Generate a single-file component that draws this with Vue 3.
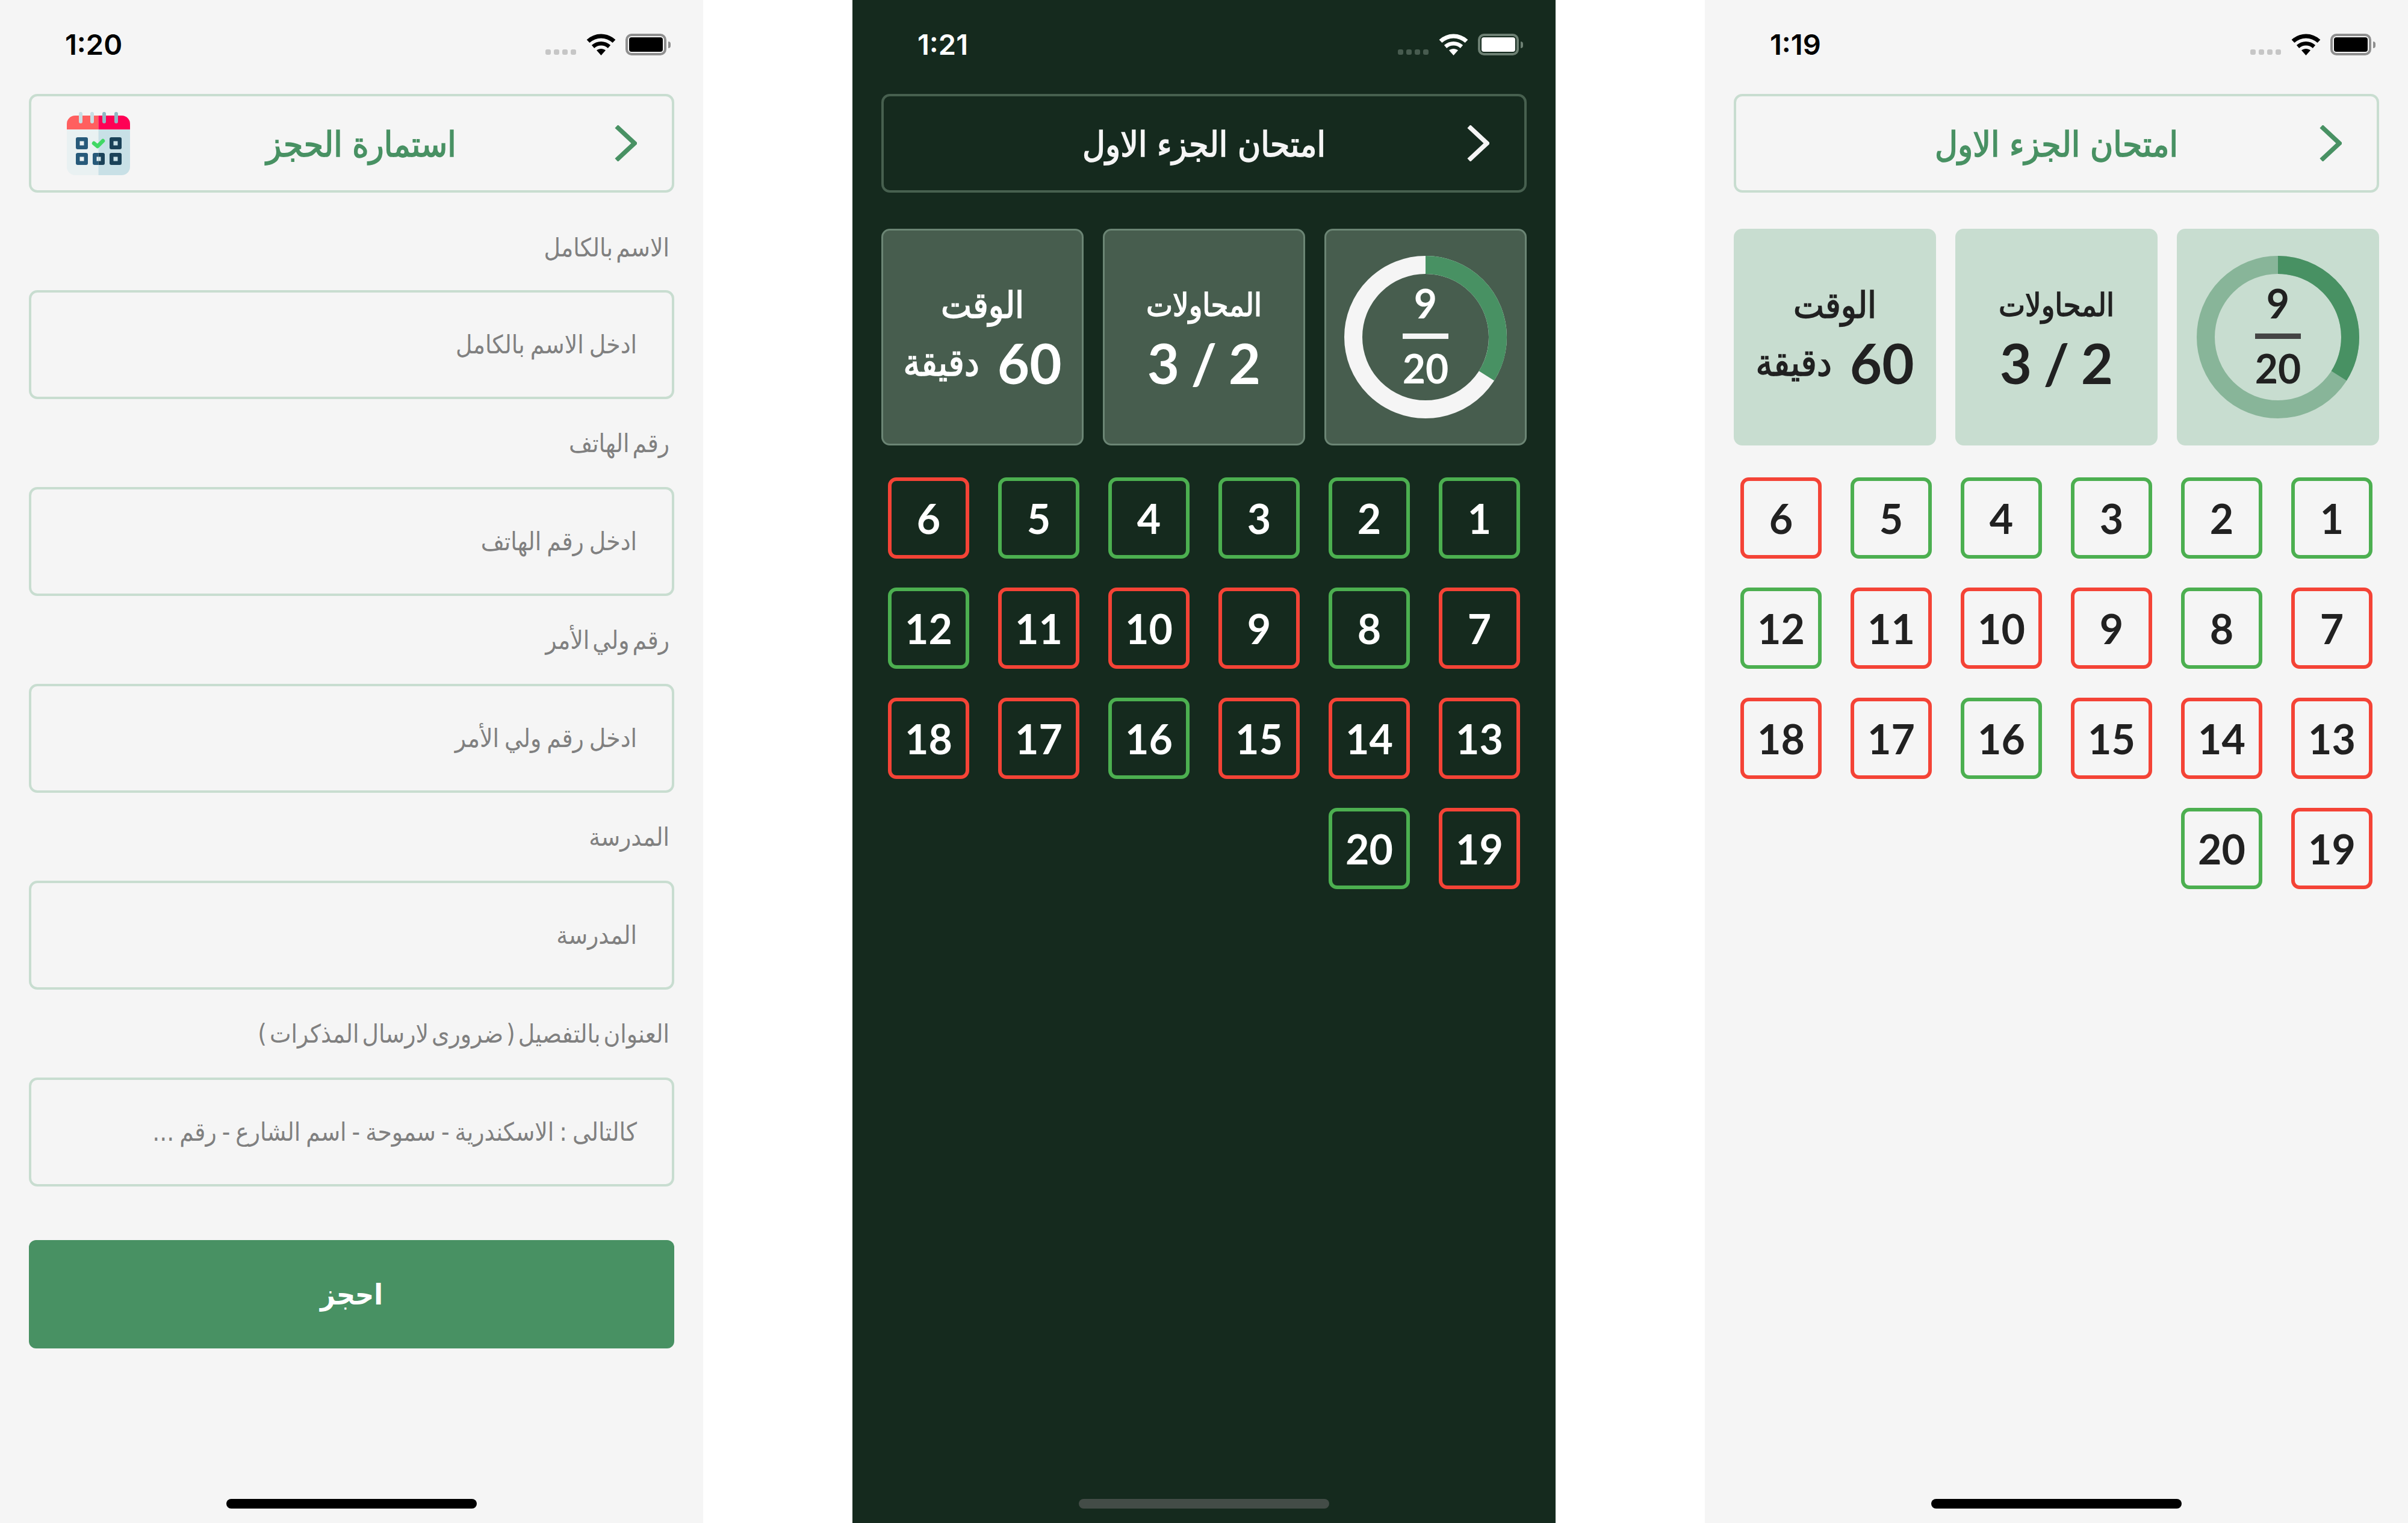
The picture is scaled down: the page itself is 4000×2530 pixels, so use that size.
<script setup>
const fields = [
  { label: 'الاسم بالكامل', hint: 'ادخل الاسم بالكامل' },
  { label: 'رقم الهاتف', hint: 'ادخل رقم الهاتف' },
  { label: 'رقم ولي الأمر', hint: 'ادخل رقم ولي الأمر' },
  { label: 'المدرسة', hint: 'المدرسة' },
  { label: 'العنوان بالتفصيل ( ضرورى لارسال المذكرات )', hint: 'كالتالى : الاسكندرية - سموحة - اسم الشارع - رقم ...' },
]
const red = new Set([6, 7, 9, 10, 11, 13, 14, 15, 17, 18, 19])
const cells = Array.from({ length: 20 }, (_, i) => ({ n: i + 1, bad: red.has(i + 1) }))
const screens = [
  { id: 'form', time: '1:20', dark: false, form: true },
  { id: 'examDark', time: '1:21', dark: true, form: false },
  { id: 'examLight', time: '1:19', dark: false, form: false },
]
</script>

<template>
  <div class="page">
    <section v-for="s in screens" :key="s.id" class="screen" :class="{ dark: s.dark }">
      <div class="status">
        <span class="time">{{ s.time }}</span>
        <div class="status-icons">
          <div class="dots"><i></i><i></i><i></i><i></i></div>
          <svg class="wifi" width="49" height="36" viewBox="0 0 49 36" fill="none" stroke="currentColor">
            <path d="M3 12.5C15.5 1 33.5 1 46 12.5" stroke-width="7" />
            <path d="M11 21.5C19 14.5 30 14.5 38 21.5" stroke-width="6.5" />
            <path d="M17 27.5C21.5 24 27.5 24 32 27.5L24.5 36Z" fill="currentColor" stroke="none" />
          </svg>
          <div class="battery"><div class="battery-body"><div class="battery-fill"></div></div><div class="battery-nub"></div></div>
        </div>
      </div>

      <template v-if="s.form">
        <header class="head">
          <svg class="cal" width="105" height="105" viewBox="0 0 105 105">
            <path d="M14 6H52.5V105H14A14 14 0 0 1 0 91V20A14 14 0 0 1 14 6Z" fill="#e9f1f2" />
            <path d="M52.5 6H91A14 14 0 0 1 105 20V91A14 14 0 0 1 91 105H52.5Z" fill="#c8e0e6" />
            <path d="M14 6H52.5V29H0V20A14 14 0 0 1 14 6Z" fill="#ff5f5f" />
            <path d="M52.5 6H91A14 14 0 0 1 105 20V29H52.5Z" fill="#ff0055" />
            <g stroke-width="6" stroke-linecap="round">
              <path d="M23 3V16M42 3V16" stroke="#c8dfe4" />
              <path d="M62 3V16M82 3V16" stroke="#8fb8c4" />
            </g>
            <g fill="#275a7a">
              <rect x="15" y="42" width="20" height="20" rx="3" />
              <rect x="15" y="68" width="20" height="20" rx="3" />
              <path d="M46 68H52.5V88H46A3 3 0 0 1 43 85V71A3 3 0 0 1 46 68Z" />
            </g>
            <g fill="#1a4258">
              <rect x="71" y="42" width="20" height="20" rx="3" />
              <rect x="71" y="68" width="20" height="20" rx="3" />
              <path d="M52.5 68H60A3 3 0 0 1 63 71V85A3 3 0 0 1 60 88H52.5Z" />
            </g>
            <g fill="#e9f1f2">
              <rect x="21.5" y="48.5" width="7" height="7" />
              <rect x="21.5" y="74.5" width="7" height="7" />
              <rect x="49.5" y="74.5" width="3" height="7" />
            </g>
            <g fill="#c8e0e6">
              <rect x="77.5" y="48.5" width="7" height="7" />
              <rect x="77.5" y="74.5" width="7" height="7" />
              <rect x="52.5" y="74.5" width="4" height="7" />
            </g>
            <path d="M45 52L51 57L60 48" fill="none" stroke="#41d865" stroke-width="6.5" stroke-linecap="round" stroke-linejoin="round" />
          </svg>
          <h1 class="title title-form">استمارة الحجز</h1>
          <svg class="chev" width="37" height="60" viewBox="0 0 37 60" fill="none" stroke="currentColor" stroke-width="7.5"><path d="M3 2L33 30L3 58" /></svg>
        </header>
        <form class="form" dir="rtl">
          <div v-for="f in fields" :key="f.label" class="field">
            <div class="label">{{ f.label }}</div>
            <div class="box">{{ f.hint }}</div>
          </div>
          <div class="submit">احجز</div>
        </form>
      </template>

      <template v-else>
        <header class="head">
          <span></span>
          <h1 class="title">امتحان الجزء الاول</h1>
          <svg class="chev" width="37" height="60" viewBox="0 0 37 60" fill="none" stroke="currentColor" stroke-width="7.5"><path d="M3 2L33 30L3 58" /></svg>
        </header>
        <div class="stats" dir="rtl">
          <div class="stat">
            <div class="ring-wrap">
              <svg class="ring" width="270" height="270" viewBox="0 0 270 270" fill="none" stroke-width="30">
                <circle class="ring-track" cx="135" cy="135" r="120" />
                <circle class="ring-value" cx="135" cy="135" r="120" pathLength="100" stroke-dasharray="34 100" transform="rotate(-90 135 135)" />
              </svg>
              <div class="fraction" dir="ltr">
                <span>9</span>
                <i></i>
                <span>20</span>
              </div>
            </div>
          </div>
          <div class="stat">
            <div class="stat-title">المحاولات</div>
            <div class="stat-value stat-tries" dir="ltr">3 / 2</div>
          </div>
          <div class="stat">
            <div class="stat-title stat-title-large">الوقت</div>
            <div class="stat-value stat-time" dir="ltr"><small>دقيقة</small><span>60</span></div>
          </div>
        </div>
        <div class="grid" dir="rtl">
          <div v-for="c in cells" :key="c.n" class="cell" :class="{ bad: c.bad }">{{ c.n }}</div>
        </div>
      </template>

      <div class="home"></div>
    </section>
  </div>
</template>

<style>
html, body { margin: 0; background: #fff; }
</style>

<style scoped>
.page { display: flex; gap: 248px; width: 4000px; height: 2530px; background: #fff; overflow: hidden; font-family: Lato, "DejaVu Sans", sans-serif; }
.screen {
  --bg: #f5f5f5; --ink: #212121; --accent: #489163; --line: #c8ddd0; --muted: #808080;
  --dot: #c6c6c6; --batt: #8f8f8f; --icon: #000; --time: #000; --card: #c8ddd0; --card-line: #c8ddd0;
  --track: #88b599; --bar: #000; --rule: #444;
  width: 1168px; height: 2530px; flex: none; box-sizing: border-box; padding: 0 48px 24px;
  display: flex; flex-direction: column; background: var(--bg); color: var(--ink);
}
.dark {
  --bg: #152a1e; --ink: #fff; --accent: #f5f5f5; --line: #47604f; --dot: #475b4f; --batt: #6d8073;
  --icon: #fff; --time: #fff; --card: #475d4e; --card-line: #6b8574; --track: #f5f5f5; --bar: #434c47; --rule: #f5f5f5;
}
.status { height: 156px; flex: none; margin: 0 -48px; box-sizing: border-box; padding: 55px 54px 0 108px; display: flex; justify-content: space-between; align-items: flex-start; }
.time { font-family: Inter, sans-serif; font-size: 47px; font-weight: 600; line-height: 37px; color: var(--time); }
.status-icons { display: flex; align-items: flex-end; height: 37px; color: var(--icon); }
.dots { display: flex; gap: 5px; margin: 0 17px 1px 0; }
.dots i { width: 9px; height: 9px; border-radius: 3px; background: var(--dot); }
.wifi { margin-right: 16px; }
.battery { display: flex; align-items: center; }
.battery-body { width: 68px; height: 36px; box-sizing: border-box; border: 4px solid var(--batt); border-radius: 10px; padding: 2px; }
.battery-fill { height: 100%; border-radius: 4px; background: var(--icon); }
.battery-nub { width: 4px; height: 11px; margin-left: 3px; border-radius: 0 4px 4px 0; background: var(--batt); }

.head { height: 164px; flex: none; box-sizing: border-box; border: 4px solid var(--line); border-radius: 14px; display: grid; grid-template-columns: 1fr auto 1fr; align-items: center; padding: 0 58px; color: var(--accent); }
.cal { justify-self: start; margin-left: 1px; }
.chev { justify-self: end; }
.title { margin: 4px 0 0; font-family: "DejaVu Sans Condensed", "DejaVu Sans", sans-serif; font-size: 58px; font-weight: 400; line-height: 1; -webkit-text-stroke: 1.6px currentColor; }
.title-form { padding-left: 32px; }

.form { display: flex; flex-direction: column; font-family: "DejaVu Sans Condensed", "DejaVu Sans", sans-serif; }
.field { display: flex; flex-direction: column; }
.label { height: 146px; padding: 0 8px 0 0; box-sizing: border-box; display: flex; align-items: center; font-size: 42px; word-spacing: -7px; color: var(--muted); }
.field:first-child .label { height: 162px; padding-top: 20px; }
.box { height: 181px; box-sizing: border-box; border: 4px solid var(--line); border-radius: 14px; padding: 0 58px; display: flex; align-items: center; font-size: 42px; word-spacing: -3px; color: var(--muted); }
.submit { height: 180px; margin-top: 89px; border-radius: 12px; background: #489163; color: #fff; display: flex; align-items: center; justify-content: center; font-size: 48px; font-weight: 700; }

.stats { display: grid; grid-template-columns: repeat(3, 1fr); gap: 32px; margin-top: 60px; }
.stat { height: 360px; box-sizing: border-box; border: 3px solid var(--card-line); border-radius: 14px; background: var(--card); display: flex; flex-direction: column; align-items: center; justify-content: center; }
.stat-title { font-family: "DejaVu Sans Condensed", "DejaVu Sans", sans-serif; font-size: 52px; line-height: 80px; font-weight: 400; -webkit-text-stroke: 1.5px currentColor; }
.stat-title-large { font-size: 60px; }
.stat-value { font-size: 92px; line-height: 100px; font-weight: 700; margin-top: 6px; }
.stat-tries { word-spacing: -3px; }
.stat-time { display: flex; align-items: center; gap: 30px; }
.stat-time small { font-family: "DejaVu Sans Condensed", "DejaVu Sans", sans-serif; font-size: 62px; font-weight: 400; -webkit-text-stroke: 1.5px currentColor; }
.ring-wrap { display: grid; width: 270px; height: 270px; }
.ring, .fraction { grid-area: 1 / 1; }
.ring-track { stroke: var(--track); }
.ring-value { stroke: #489163; }
.fraction { display: flex; flex-direction: column; align-items: center; justify-content: center; padding-bottom: 4px; box-sizing: border-box; font-size: 66px; font-weight: 700; line-height: 1; }
.fraction i { width: 76px; height: 9px; margin: 17px 0 16px; background: var(--rule); }

.grid { display: grid; grid-template-columns: repeat(6, 135px); gap: 48px; padding: 53px 11px 0; justify-content: space-between; }
.cell { height: 135px; box-sizing: border-box; border: 6px solid #4caf50; border-radius: 14px; display: flex; align-items: center; justify-content: center; font-size: 68px; font-weight: 700; }
.cell.bad { border-color: #f44336; }

.home { width: 416px; height: 16px; flex: none; margin-top: auto; align-self: center; border-radius: 8px; background: var(--bar); }
</style>
